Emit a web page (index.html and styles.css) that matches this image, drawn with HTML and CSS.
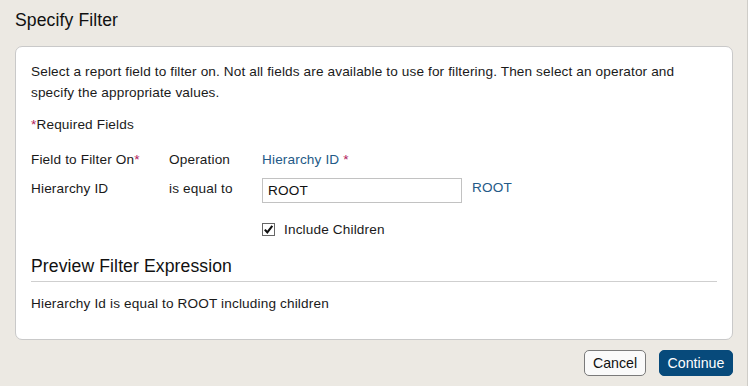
FILE: index.html
```html
<!DOCTYPE html>
<html>
<head>
<meta charset="utf-8">
<link rel="stylesheet" href="styles.css">
</head>
<body>
<div class="dialog">
  <h1 class="title">Specify Filter</h1>
  <div class="panel">
    <p class="intro">Select a report field to filter on. Not all fields are available to use for filtering. Then select an operator and specify the appropriate values.</p>
    <p class="required"><span class="star">*</span>Required Fields</p>
    <div class="grid">
      <div class="cell">Field to Filter On<span class="star">*</span></div>
      <div class="cell">Operation</div>
      <div class="cell blue">Hierarchy ID <span class="star">*</span></div>
      <div class="cell"></div>

      <div class="cell">Hierarchy ID</div>
      <div class="cell">is equal to</div>
      <div class="cell"><div class="input">ROOT</div></div>
      <div class="cell blue value">ROOT</div>

      <div class="cell"></div>
      <div class="cell"></div>
      <div class="cell check-row span2">
        <span class="checkbox"><svg width="11" height="11" viewBox="0 0 11 11"><path d="M1.8 5.6 L4.3 8.3 L9.3 1.8" fill="none" stroke="#111" stroke-width="2.1"/></svg></span>
        <span>Include Children</span>
      </div>
    </div>
    <h2 class="subhead">Preview Filter Expression</h2>
    <p class="expr">Hierarchy Id is equal to ROOT including children</p>
  </div>
  <div class="buttons">
    <button class="btn cancel">Cancel</button>
    <button class="btn primary">Continue</button>
  </div>
</div>
</body>
</html>
```
FILE: styles.css
```css
html, body {
  margin: 0;
  padding: 0;
}
body {
  width: 748px;
  height: 386px;
  background: #ece9e3;
  font-family: "Liberation Sans", Arial, sans-serif;
  color: #1a1a1a;
  overflow: hidden;
}
.dialog {
  box-sizing: border-box;
  width: 748px;
  height: 386px;
  border-right: 1px solid #cfcdc8;
}
.title {
  margin: 0;
  padding: 9px 15px 15px;
  font-size: 17.6px;
  font-weight: normal;
  line-height: 22px;
  color: #111;
  letter-spacing: 0.1px;
}
.panel {
  margin: 0 15px;
  width: 718px;
  box-sizing: border-box;
  background: #fff;
  border: 1px solid #c9c9c9;
  border-radius: 7px;
  padding: 14px 15px 25px;
  font-size: 13.6px;
  line-height: 21px;
  letter-spacing: 0.15px;
}
.panel p {
  margin: 0;
}
.intro {
  letter-spacing: 0.13px;
}
.required {
  margin-top: 11px !important;
}
.star {
  color: #b0205a;
}
.blue {
  color: #245a87;
}
.grid {
  margin-top: 14px;
  display: grid;
  grid-template-columns: 138px 93px 200px auto;
  grid-auto-rows: auto;
  row-gap: 0;
}
.cell {
  line-height: 21px;
}
.grid .cell:nth-child(-n+4) {
  margin-bottom: 7.5px;
}
.value {
  padding-left: 10px;
  line-height: 19px;
}
.input {
  box-sizing: border-box;
  width: 200px;
  height: 25px;
  border: 1px solid #c2c2c2;
  padding: 0 5px;
  line-height: 24px;
  color: #111;
}
.span2 {
  grid-column: 3 / 5;
}
.check-row {
  margin-top: 16.5px;
  display: flex;
  align-items: center;
  gap: 9px;
}
.checkbox {
  box-sizing: border-box;
  width: 13px;
  height: 13px;
  border: 1px solid #666;
  background: #fff;
  display: flex;
  align-items: center;
  justify-content: center;
}
.subhead {
  margin: 15px 0 0;
  padding-bottom: 4px;
  border-bottom: 1px solid #cfcfcf;
  font-size: 17.6px;
  font-weight: normal;
  line-height: 22px;
  color: #111;
  letter-spacing: 0.1px;
}
.expr {
  margin-top: 10.5px !important;
}
.buttons {
  display: flex;
  justify-content: flex-end;
  gap: 13px;
  padding: 10px 14px 0 0;
}
.btn {
  height: 26px;
  font-family: "Liberation Sans", Arial, sans-serif;
  font-size: 14.2px;
  border-radius: 5px;
  padding: 0 4px;
  margin: 0;
  cursor: pointer;
}
.cancel {
  background: #fafafa;
  border: 1px solid #7a7a7a;
  color: #111;
  width: 62px;
}
.primary {
  background: #074a7b;
  border: 1px solid #074a7b;
  color: #fff;
  width: 74px;
}
```
